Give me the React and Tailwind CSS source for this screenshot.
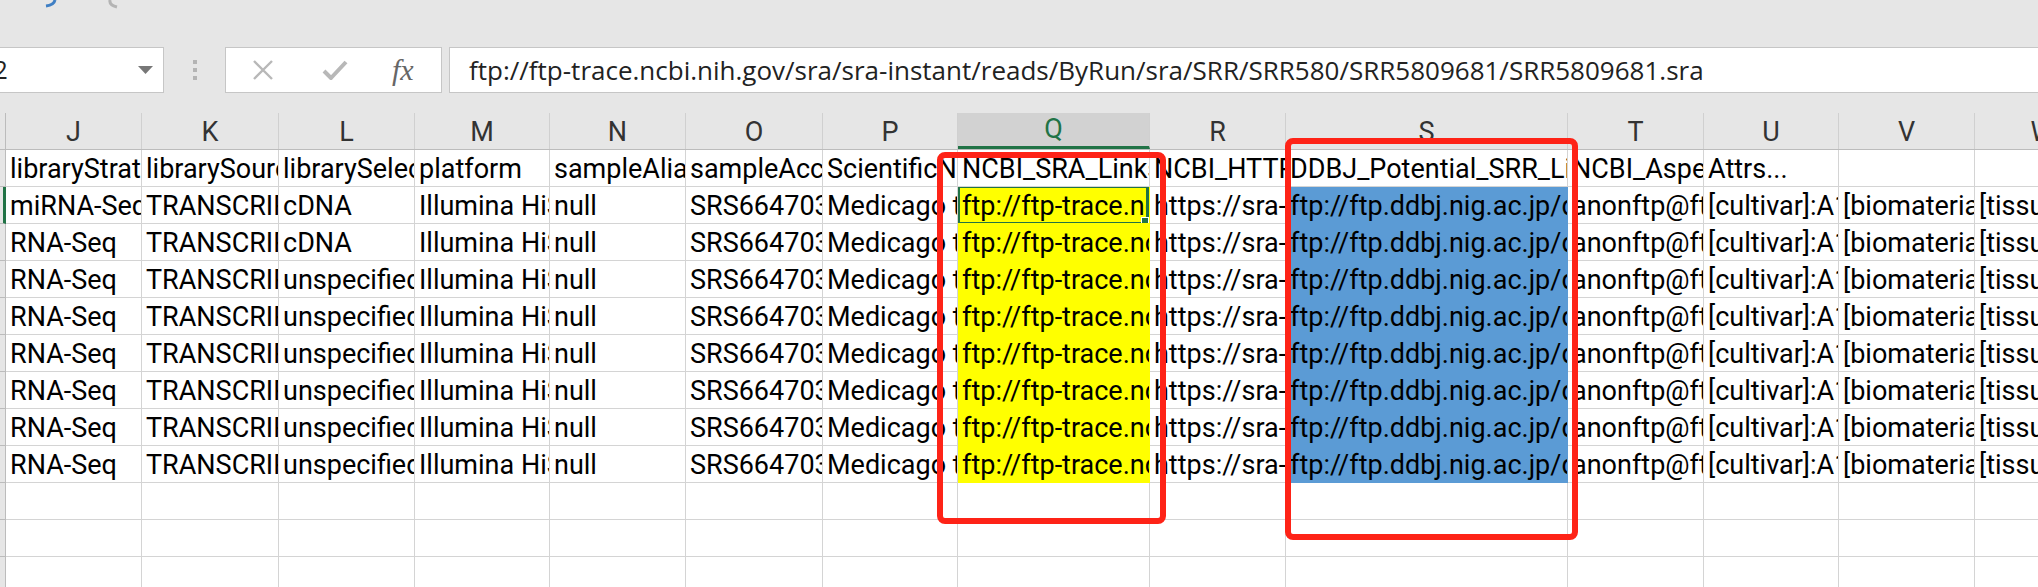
import React from 'react';

const COLS = [
  { k: 'J', w: 'w-[136px]' },
  { k: 'K', w: 'w-[137px]' },
  { k: 'L', w: 'w-[136px]' },
  { k: 'M', w: 'w-[135px]' },
  { k: 'N', w: 'w-[136px]' },
  { k: 'O', w: 'w-[137px]' },
  { k: 'P', w: 'w-[135px]' },
  { k: 'Q', w: 'w-[192px]' },
  { k: 'R', w: 'w-[136px]' },
  { k: 'S', w: 'w-[282px]' },
  { k: 'T', w: 'w-[136px]' },
  { k: 'U', w: 'w-[135px]' },
  { k: 'V', w: 'w-[136px]' },
  { k: 'W', w: 'w-[136px]' },
];

const HEAD = [
  'libraryStrategy', 'librarySource', 'librarySelection', 'platform', 'sampleAlias',
  'sampleAccession', 'ScientificName', 'NCBI_SRA_Links', 'NCBI_HTTPS_Links',
  'DDBJ_Potential_SRR_Links', 'NCBI_Aspera_Links', 'Attrs...', '', '',
];

function dataRow(strategy, selection) {
  return [
    strategy, 'TRANSCRIPTOMIC', selection, 'Illumina HiSeq 2000', 'null', 'SRS6647031',
    'Medicago truncatula', 'ftp://ftp-trace.ncbi.nih.gov/sra/sra-instant/reads/ByRun/sra/SRR/SRR580/SRR5809681/SRR5809681.sra',
    'https://sra-download.ncbi.nlm.nih.gov/traces/sra4/SRR/005673/SRR5809681',
    'ftp://ftp.ddbj.nig.ac.jp/ddbj_database/dra/sralite/ByExp/litesra/SRX/SRX297/SRX2979164/SRR5809681/SRR5809681.sra',
    'anonftp@ftp-private.ncbi.nlm.nih.gov:/sra/sra-instant/reads/ByRun/sra/SRR/SRR580/SRR5809681/SRR5809681.sra',
    '[cultivar]:A17', '[biomaterial_provider]:INRA', '[tissue]:root',
  ];
}

const ROWS = [
  HEAD,
  dataRow('miRNA-Seq', 'cDNA'),
  dataRow('RNA-Seq', 'cDNA'),
  ...Array.from({ length: 6 }, () => dataRow('RNA-Seq', 'unspecified')),
  Array(14).fill(''),
  Array(14).fill(''),
  Array(14).fill(''),
  Array(14).fill(''),
];

const cellFont = "font-['Roboto','Noto_Sans_CJK_SC',sans-serif] text-[27px]";

function Cell({ col, ri, text }) {
  const filled = ri >= 1 && ri <= 8;
  let tone = 'bg-white border-[#d4d4d4]';
  if (filled && col.k === 'Q') tone = 'bg-[#ffff00] border-[#ffff00]';
  if (filled && col.k === 'S') tone = 'bg-[#5b9bd5] border-[#5b9bd5]';
  const active = ri === 1 && col.k === 'Q';
  return (
    <div className={`${col.w} ${tone} relative shrink-0 h-full border-r border-b flex items-end pl-[4px] pb-[3px] whitespace-nowrap overflow-hidden text-black`}>
      <span className="leading-none">{text}</span>
      {active && (
        <div className="absolute -left-[1px] -top-[2px] right-0 -bottom-[2px] border-[3px] border-[#217346]">
          <div className="absolute -right-[3px] -bottom-[3px] w-[8px] h-[8px] bg-[#217346] border border-white" />
        </div>
      )}
    </div>
  );
}

export default function App() {
  return (
    <div className="w-[2038px] h-[587px] overflow-hidden bg-white relative">
      {/* formula bar area */}
      <div className="h-[113px] bg-[#e6e6e6]">
        <div className="h-[47px] flex items-start">
          <svg width="130" height="10" className="shrink-0">
            <path d="M55 0 Q54 5 46 6" stroke="#3f7fc4" strokeWidth="3" fill="none" />
            <path d="M110 0 Q109 5 117 7" stroke="#b4b4b4" strokeWidth="3" fill="none" />
          </svg>
        </div>
        <div className="h-[46px] flex items-stretch">
          <div className="ml-[-40px] w-[204px] shrink-0 bg-white border border-[#c6c6c6] flex items-center pl-[13px] pr-[10px] justify-between">
            <span className="font-['Open_Sans',sans-serif] text-[25px] text-[#222]">Q2</span>
            <svg width="15" height="8" viewBox="0 0 15 8">
              <path d="M0 0 H15 L7.5 8 Z" fill="#777" />
            </svg>
          </div>
          <div className="w-[61px] shrink-0 flex flex-col items-center justify-center gap-[4px]">
            <div className="w-[4px] h-[4px] bg-[#b4b4b4]" />
            <div className="w-[4px] h-[4px] bg-[#b4b4b4]" />
            <div className="w-[4px] h-[4px] bg-[#b4b4b4]" />
          </div>
          <div className="w-[217px] shrink-0 bg-white border border-[#c6c6c6] flex items-center">
            <svg width="22" height="22" viewBox="0 0 22 22" className="ml-[26px]">
              <path d="M2 2 L20 20 M20 2 L2 20" stroke="#b8b8b8" strokeWidth="2.4" fill="none" />
            </svg>
            <svg width="26" height="22" viewBox="0 0 26 22" className="ml-[48px]">
              <path d="M2 12 L9 19 L24 3" stroke="#b8b8b8" strokeWidth="4" fill="none" strokeLinejoin="round" />
            </svg>
            <span className="ml-[44px] font-['Liberation_Serif',serif] italic text-[30px] text-[#666] leading-none">fx</span>
          </div>
          <div className="ml-[7px] flex-1 bg-white border border-[#c6c6c6] border-r-0 flex items-center pl-[19px] whitespace-nowrap overflow-hidden">
            <span className="font-['Open_Sans',sans-serif] text-[26px] text-[#222]">
              ftp://ftp-trace.ncbi.nih.gov/sra/sra-instant/reads/ByRun/sra/SRR/SRR580/SRR5809681/SRR5809681.sra
            </span>
          </div>
        </div>
      </div>

      {/* column headers */}
      <div className="h-[37px] flex bg-[#e6e6e6] border-b border-[#bcbcbc]">
        <div className="w-[6px] shrink-0 border-r border-[#bcbcbc] bg-[#e6e6e6]" />
        {COLS.map((c) => (
          <div
            key={c.k}
            className={`${c.w} shrink-0 h-full flex items-end justify-center pb-[3px] border-r border-[#d0d0d0] ${cellFont} ${
              c.k === 'Q' ? 'bg-[#d2d2d2] text-[#217346] border-b-[3px] border-b-[#217346]' : 'text-[#333]'
            }`}
          >
            <span className="leading-none">{c.k}</span>
          </div>
        ))}
      </div>

      {/* grid */}
      <div className={cellFont}>
        {ROWS.map((row, ri) => (
          <div key={ri} className="h-[37px] flex">
            <div className={`w-[6px] shrink-0 bg-[#e6e6e6] border-b border-[#bcbcbc] ${ri === 1 ? 'border-r-[3px] border-r-[#217346]' : 'border-r border-r-[#bcbcbc]'}`} />
            {COLS.map((c, ci) => (
              <Cell key={c.k} col={c} ri={ri} text={row[ci]} />
            ))}
          </div>
        ))}
      </div>

      {/* red annotation boxes */}
      <div className="absolute left-[937px] top-[152px] w-[229px] h-[372px] border-[6px] border-[#fe2317] rounded-[8px]" />
      <div className="absolute left-[1285px] top-[138px] w-[293px] h-[402px] border-[6px] border-[#fe2317] rounded-[8px]" />
    </div>
  );
}
